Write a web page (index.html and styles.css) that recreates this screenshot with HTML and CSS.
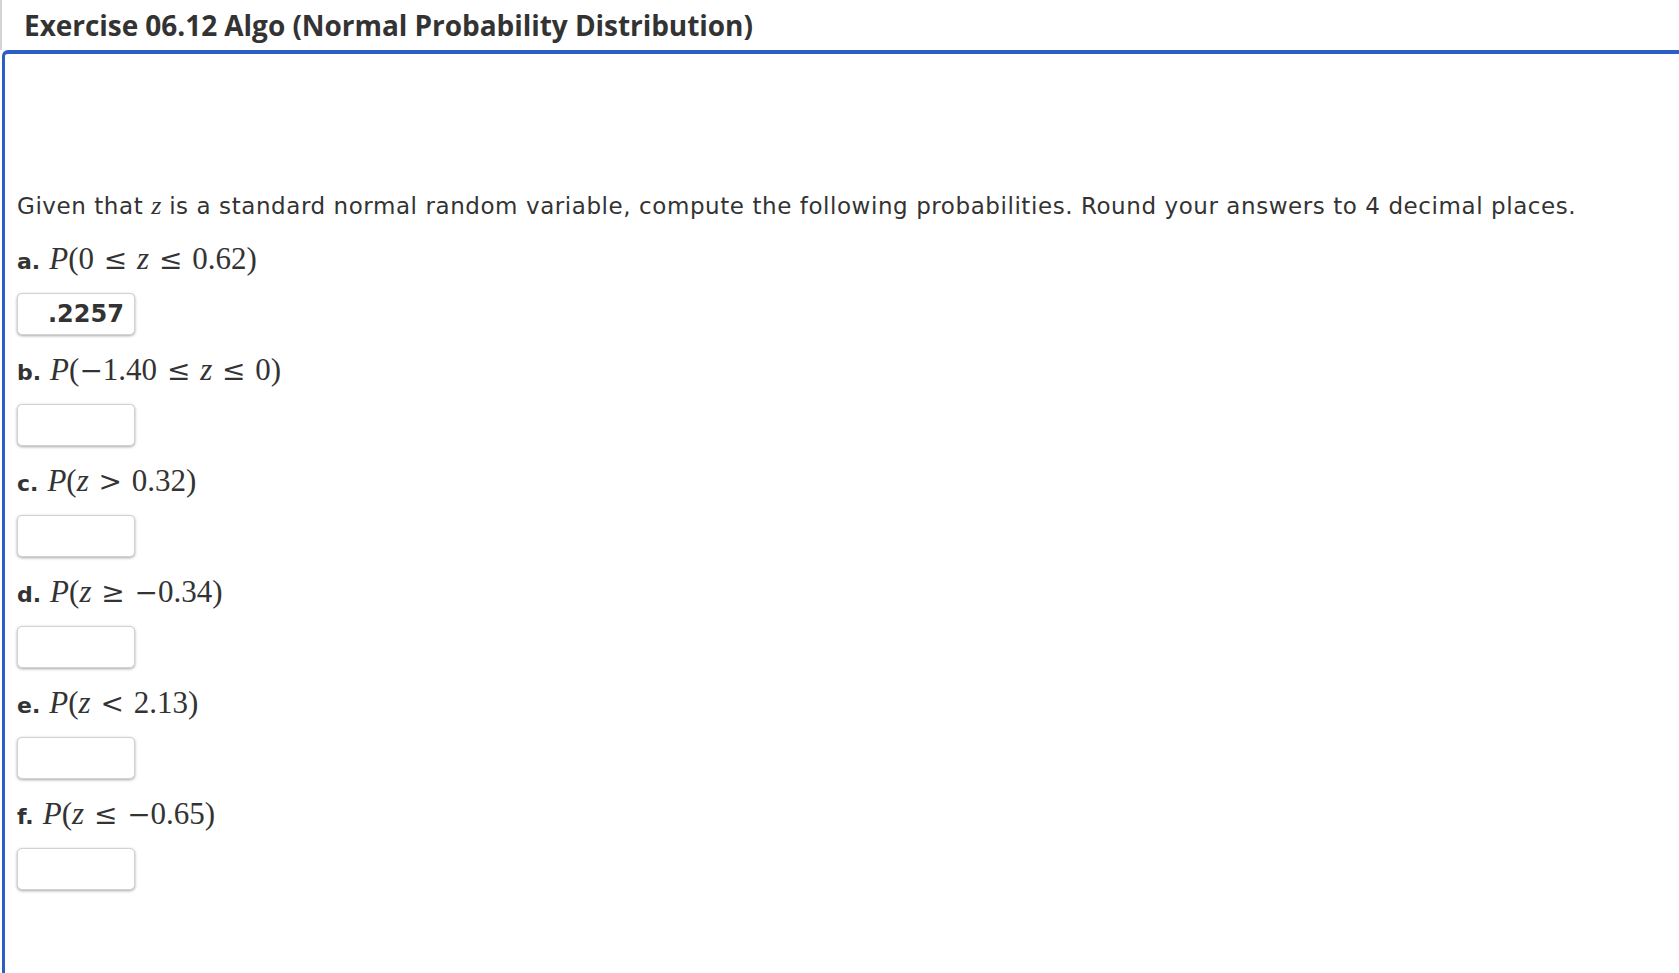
FILE: index.html
```html
<!DOCTYPE html>
<html lang="en">
<head>
<meta charset="UTF-8">
<meta name="viewport" content="width=device-width, initial-scale=1.0">
<title>Exercise 06.12 Algo</title>
<link rel="stylesheet" href="styles.css">
</head>
<body>
<div class="head">
    <h1>Exercise 06.12 Algo (Normal Probability Distribution)</h1>
</div>
<div class="box">
    <p class="intro">Given that <i class="mv">z</i> is a standard normal random variable, compute the following probabilities. Round your answers to 4 decimal places.</p>

    <div class="part">
        <div class="q"><b>a.</b> <span class="math"><i>P</i>(0<span class="rel">&le;</span><i>z</i><span class="rel">&le;</span>0.62)</span></div>
        <div class="ans">.2257</div>
    </div>
    <div class="part">
        <div class="q"><b>b.</b> <span class="math"><i>P</i>(<span class="neg">&minus;</span>1.40<span class="rel">&le;</span><i>z</i><span class="rel">&le;</span>0)</span></div>
        <div class="ans"></div>
    </div>
    <div class="part">
        <div class="q"><b>c.</b> <span class="math"><i>P</i>(<i>z</i><span class="rel">&gt;</span>0.32)</span></div>
        <div class="ans"></div>
    </div>
    <div class="part">
        <div class="q"><b>d.</b> <span class="math"><i>P</i>(<i>z</i><span class="rel">&ge;</span><span class="neg">&minus;</span>0.34)</span></div>
        <div class="ans"></div>
    </div>
    <div class="part">
        <div class="q"><b>e.</b> <span class="math"><i>P</i>(<i>z</i><span class="rel">&lt;</span>2.13)</span></div>
        <div class="ans"></div>
    </div>
    <div class="part">
        <div class="q"><b>f.</b> <span class="math"><i>P</i>(<i>z</i><span class="rel">&le;</span><span class="neg">&minus;</span>0.65)</span></div>
        <div class="ans"></div>
    </div>
</div>
</body>
</html>
```

FILE: styles.css
```css
*{margin: 0; padding: 0;}
html,body{
    height: 100%;
    background: #fff;
    overflow: hidden;
}
body{
    font-family: "DejaVu Sans", Verdana, sans-serif;
    color: #333;
}
.head{
    height: 50px;
    border-left: 2px solid #d4d4d4;
    padding-left: 22px;
    box-sizing: border-box;
}
.head h1{
    font-family: "Open Sans", sans-serif;
    font-weight: 700;
    font-size: 28px;
    line-height: 50px;
    color: #333;
    letter-spacing: -0.05px;
}
.box{
    margin-left: 2px;
    height: 923px;
    box-sizing: border-box;
    border-top: 4px solid #2c5ec4;
    border-left: 3px solid #2c5ec4;
    border-top-left-radius: 6px;
    padding: 137px 0 0 12px;
}
.intro{
    font-size: 23px;
    line-height: 30px;
    letter-spacing: 0.57px;
    margin-bottom: 18px;
}
.mv, .math{
    font-family: "Liberation Serif", "Times New Roman", serif;
}
.mv{
    font-size: 26px;
    letter-spacing: 0;
}
.part{
    margin-bottom: 15px;
}
.q{
    height: 40px;
    line-height: 40px;
    font-size: 22px;
    margin-bottom: 14px;
    white-space: nowrap;
}
.q b{
    font-weight: 700;
}
.math{
    font-size: 31px;
    margin-left: 2px;
}
.rel{
    font-family: "DejaVu Serif", serif;
    font-size: 28px;
    margin: 0 0.35em;
}
.neg{
    font-family: "DejaVu Serif", serif;
    font-size: 28px;
}
.ans{
    width: 118px;
    height: 42px;
    box-sizing: border-box;
    border: 1px solid #d2d2d2;
    border-radius: 5px;
    box-shadow: 0 1px 3px rgba(0,0,0,0.35);
    background: #fff;
    padding-left: 30px;
    font-size: 24px;
    font-weight: 700;
    line-height: 40px;
    color: #333;
}
```
